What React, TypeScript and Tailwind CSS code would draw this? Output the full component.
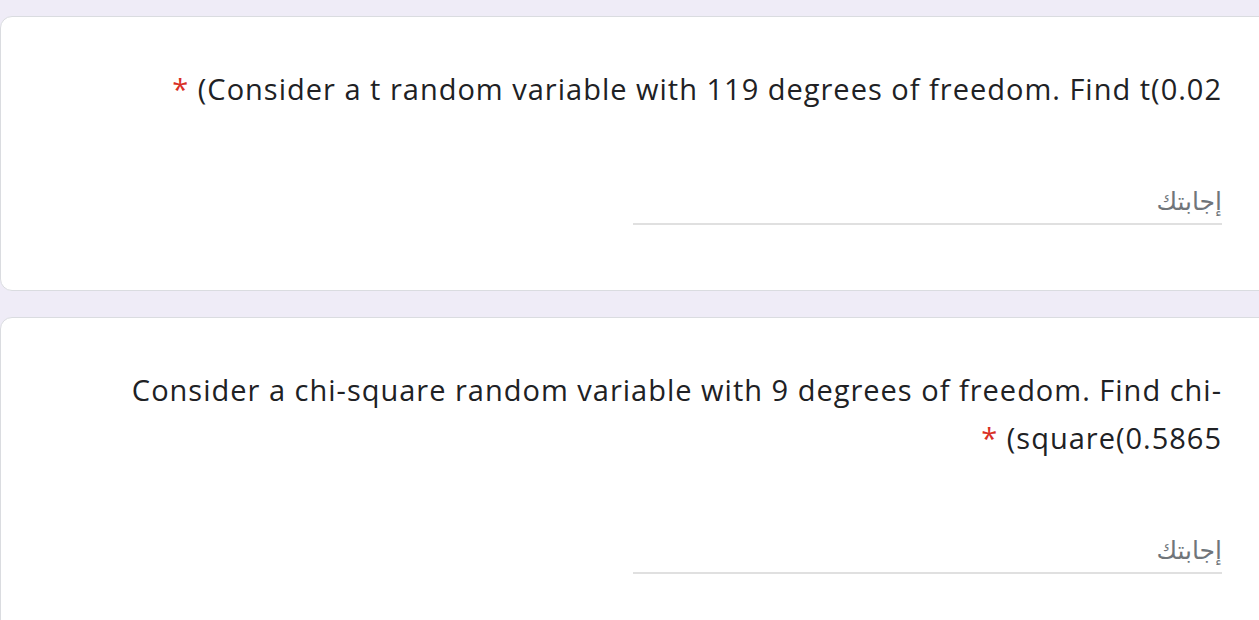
export default function App() {
  return (
    <main
      dir="rtl"
      className="h-[620px] overflow-hidden bg-[#efecf7] pt-[16px] text-[#202124]"
      style={{ fontFamily: "'Open Sans', Roboto, 'DejaVu Sans', sans-serif" }}
    >
      <div className="mr-[-24px] space-y-[26px]">
        <QuestionCard title="Consider a t random variable with 119 degrees of freedom. Find t(0.02" />
        <QuestionCard title="Consider a chi-square random variable with 9 degrees of freedom. Find chi-square(0.5865" />
      </div>
    </main>
  );
}

function QuestionCard({ title }: { title: string }) {
  return (
    <section className="rounded-[12px] border border-[#dadce0] bg-white pb-[65px] pl-[43px] pr-[60px] pt-[48px]">
      <h2 className="text-[29px] font-normal leading-[48px] tracking-[1px]">
        <bdi>{title}</bdi>)<span className="text-[#d93025]"> *</span>
      </h2>

      <div className="mt-[66px] w-[589px]">
        <input
          type="text"
          placeholder="إجابتك"
          className="h-[46px] w-full border-b-2 border-[#e0e0e0] bg-transparent text-[25px] outline-none placeholder:text-[#70757a]"
          style={{ fontFamily: "'DejaVu Sans', sans-serif" }}
        />
      </div>
    </section>
  );
}
